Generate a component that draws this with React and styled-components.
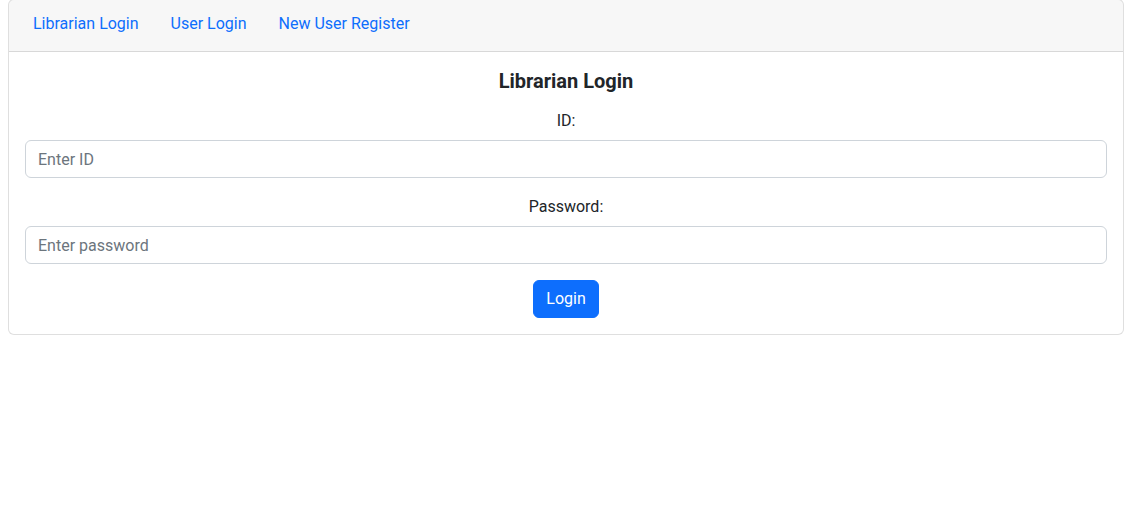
import React from "react";
import styled, { createGlobalStyle } from "styled-components";

const GlobalStyle = createGlobalStyle`
  body {
    margin: 0 20px 0 8px;
    font-family: Roboto, "Noto Sans", sans-serif;
    font-size: 16px;
    line-height: 1.5;
    color: #212529;
    background: #fff;
  }
  * { box-sizing: border-box; }
`;

const Card = styled.div`
  margin-top: -1px;
  border: 1px solid rgba(0, 0, 0, 0.125);
  border-radius: 6px;
  background: #fff;
`;

const CardHeader = styled.div`
  display: flex;
  padding: 4px 8px 7px;
  background: rgba(0, 0, 0, 0.03);
  border-bottom: 1px solid rgba(0, 0, 0, 0.125);
  border-radius: 5px 5px 0 0;
`;

const NavLink = styled.a`
  display: block;
  padding: 8px 16px;
  color: #0d6efd;
  text-decoration: none;
  cursor: pointer;
`;

const CardBody = styled.form`
  padding: 16px;
  text-align: center;
`;

const Title = styled.h5`
  margin: 1px 0 15px;
  font-size: 20px;
  font-weight: 700;
  line-height: 1.2;
`;

const Label = styled.label`
  display: block;
  padding-top: 1px;
  margin-bottom: 7px;
`;

const Input = styled.input`
  display: block;
  width: 100%;
  height: 38px;
  margin-bottom: 16px;
  padding: 6px 12px;
  font: inherit;
  color: #212529;
  border: 1px solid #ced4da;
  border-radius: 6px;
  &::placeholder { color: #6c757d; }
`;

const Button = styled.button`
  height: 38px;
  padding: 6px 12px;
  font: inherit;
  color: #fff;
  background: #0d6efd;
  border: 1px solid #0d6efd;
  border-radius: 6px;
  cursor: pointer;
`;

export default function App() {
  return (
    <>
      <GlobalStyle />
      <Card>
        <CardHeader>
          <NavLink>Librarian Login</NavLink>
          <NavLink>User Login</NavLink>
          <NavLink>New User Register</NavLink>
        </CardHeader>
        <CardBody onSubmit={(e) => e.preventDefault()}>
          <Title>Librarian Login</Title>
          <Label htmlFor="id">ID:</Label>
          <Input id="id" type="text" placeholder="Enter ID" />
          <Label htmlFor="pwd">Password:</Label>
          <Input id="pwd" type="password" placeholder="Enter password" />
          <Button type="submit">Login</Button>
        </CardBody>
      </Card>
    </>
  );
}
